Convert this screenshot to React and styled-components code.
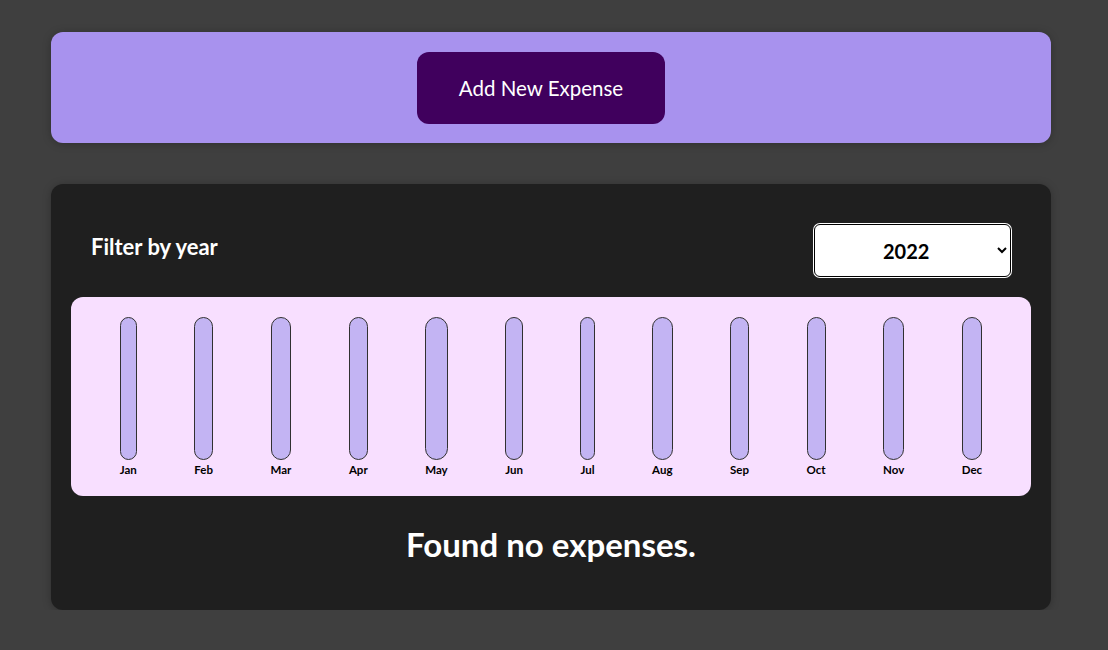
import React from 'react';
import styled, { createGlobalStyle } from 'styled-components';

const GlobalStyle = createGlobalStyle`
	* {
		box-sizing: border-box;
	}

	body {
		margin: 0;
		background: #3f3f3f;
		font-family: Lato, 'Noto Sans', sans-serif;
	}
`;

const Page = styled.div`
	padding: 32px 6px 0 0;
`;

const NewExpense = styled.div`
	width: 1000px;
	height: 111px;
	margin: 0 auto 41px;
	background: #a892ee;
	border-radius: 12px;
	box-shadow: 0 1px 8px rgba(0, 0, 0, 0.25);
	display: flex;
	align-items: center;
	justify-content: center;
`;

const Button = styled.button`
	width: 248px;
	height: 72px;
	margin-right: 20px;
	border: none;
	border-radius: 12px;
	background: #40005d;
	color: #fff;
	font: inherit;
	font-size: 20.5px;
	cursor: pointer;
`;

const Card = styled.div`
	width: 1000px;
	margin: 0 auto;
	padding: 20px;
	background: #1f1f1f;
	border-radius: 12px;
	box-shadow: 0 1px 8px rgba(0, 0, 0, 0.25);
`;

const Filter = styled.div`
	display: flex;
	align-items: center;
	justify-content: space-between;
	padding: 0 20px;
	margin: 20px 0;
	color: #fff;
`;

const Label = styled.label`
	font-weight: bold;
	font-size: 22px;
	margin-bottom: 8px;
`;

const Select = styled.select`
	width: 197px;
	height: 53px;
	padding: 0 8px 0 64px;
	font: inherit;
	font-size: 20px;
	font-weight: bold;
	color: #000;
	background: #fff;
	border: 1px solid #000;
	border-radius: 6px;
	box-shadow: 0 0 0 1px #fff;
`;

const Chart = styled.div`
	display: flex;
	justify-content: space-around;
	height: 199px;
	padding: 20px;
	background: #f8dfff;
	border-radius: 12px;
`;

const Bar = styled.div`
	display: flex;
	flex-direction: column;
	align-items: center;
	height: 100%;
`;

const BarInner = styled.div`
	flex: 1;
	width: 100%;
	border: 1px solid #313131;
	border-radius: 12px;
	background: #c3b4f3;
`;

const BarLabel = styled.div`
	margin-top: 3px;
	font-size: 11.5px;
	font-weight: bold;
	line-height: 13px;
	color: #000;
`;

const Empty = styled.h2`
	margin: 30px 0 28px;
	text-align: center;
	color: #fff;
	font-size: 33px;
	line-height: 36px;
`;

const months = ['Jan', 'Feb', 'Mar', 'Apr', 'May', 'Jun', 'Jul', 'Aug', 'Sep', 'Oct', 'Nov', 'Dec'];

function App() {
	return (
		<Page>
			<GlobalStyle />
			<NewExpense>
				<Button>Add New Expense</Button>
			</NewExpense>
			<Card>
				<Filter>
					<Label>Filter by year</Label>
					<Select defaultValue="2022">
						<option value="2022">2022</option>
						<option value="2021">2021</option>
						<option value="2020">2020</option>
						<option value="2019">2019</option>
					</Select>
				</Filter>
				<Chart>
					{months.map((m) => (
						<Bar key={m}>
							<BarInner />
							<BarLabel>{m}</BarLabel>
						</Bar>
					))}
				</Chart>
				<Empty>Found no expenses.</Empty>
			</Card>
		</Page>
	);
}

export default App;
